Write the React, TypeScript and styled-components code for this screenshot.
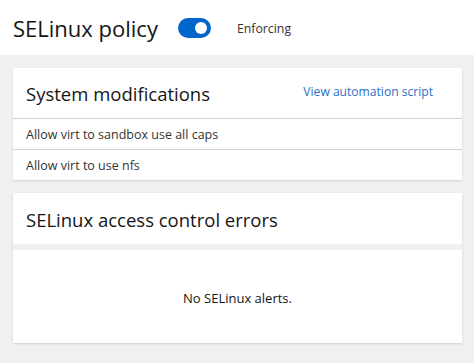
import React from 'react'
import styled, { createGlobalStyle } from 'styled-components'

const GlobalStyle = createGlobalStyle`
    html, body {
        margin: 0;
        padding: 0;
        background: #f0f0f0;
        font-family: "Open Sans", "Liberation Sans", sans-serif;
        color: #151515;
    }
`

const modifications = ['Allow virt to sandbox use all caps', 'Allow virt to use nfs']

const App = () => {
    return (
        <Page>
            <GlobalStyle />
            <Header>
                <PageTitle>SELinux policy</PageTitle>
                <Switch aria-checked="true" role="switch">
                    <Knob />
                </Switch>
                <SwitchLabel>Enforcing</SwitchLabel>
            </Header>
            <Main>
                <Card>
                    <CardHeader $divider>
                        <CardTitle>System modifications</CardTitle>
                        <LinkButton>View automation script</LinkButton>
                    </CardHeader>
                    {modifications.map((item) => (
                        <Row key={item}>{item}</Row>
                    ))}
                </Card>
                <Card>
                    <CardHeader>
                        <CardTitle>SELinux access control errors</CardTitle>
                    </CardHeader>
                    <Band />
                    <EmptyState>No SELinux alerts.</EmptyState>
                </Card>
            </Main>
        </Page>
    )
}

const Page = styled.div`
    width: 474px;
    height: 363px;
    display: flex;
    flex-direction: column;
    background: #f0f0f0;
`

const Header = styled.header`
    height: 55px;
    background: #fff;
    display: flex;
    align-items: center;
    padding-left: 13px;
    box-sizing: border-box;
`

const PageTitle = styled.h1`
    margin: 0;
    font-size: 22px;
    font-weight: 400;
    line-height: 1;
    padding-top: 1px;
`

const Switch = styled.div`
    margin-left: 20px;
    width: 33px;
    height: 20px;
    border-radius: 10px;
    background: #0066cc;
    display: flex;
    align-items: center;
    justify-content: flex-end;
    padding-right: 4px;
    box-sizing: border-box;
`

const Knob = styled.span`
    width: 12px;
    height: 12px;
    border-radius: 50%;
    background: #fff;
`

const SwitchLabel = styled.span`
    margin-left: 26px;
    font-size: 12.3px;
    color: #333;
    padding-top: 1px;
`

const Main = styled.main`
    flex: 1;
    display: flex;
    flex-direction: column;
    gap: 13px;
    padding: 13px 12px 0 13px;
`

const Card = styled.section`
    background: #fff;
    display: flex;
    flex-direction: column;
    box-shadow: 0 1px 2px rgba(3, 3, 3, 0.12), 0 0 1px rgba(3, 3, 3, 0.06);
`

const CardHeader = styled.div<{ $divider?: boolean }>`
    height: 51px;
    display: flex;
    align-items: center;
    justify-content: space-between;
    padding: 0 29px 0 13px;
    box-sizing: border-box;
    border-bottom: ${(p) => (p.$divider ? '1px solid #d2d2d2' : 'none')};
`

const CardTitle = styled.h2`
    margin: 0;
    font-size: 18.5px;
    font-weight: 400;
    line-height: 1;
    padding-top: 3px;
`

const LinkButton = styled.a`
    font-size: 12.1px;
    color: #2b71c4;
    cursor: pointer;
    align-self: flex-start;
    margin-top: 15px;
`

const Row = styled.div`
    height: 30px;
    display: flex;
    align-items: center;
    padding: 0 13px;
    font-size: 12.5px;
    color: #333;
    border-bottom: 1px solid #d2d2d2;

    &:last-child {
        border-bottom: none;
    }
`

const Band = styled.div`
    height: 6px;
    background: #f0f0f0;
`

const EmptyState = styled.div`
    height: 93px;
    display: flex;
    align-items: center;
    justify-content: center;
    font-size: 13px;
    font-weight: 500;
    padding-top: 3px;
    box-sizing: border-box;
`

export default App
